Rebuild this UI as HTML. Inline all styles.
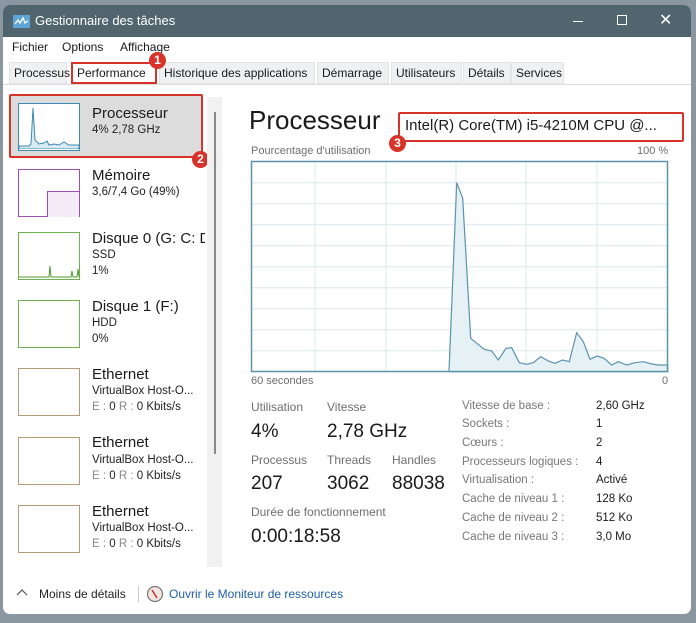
<!DOCTYPE html>
<html><head><meta charset="utf-8"><style>
*{margin:0;padding:0;box-sizing:border-box}
body{width:696px;height:623px;background:#8a96a0;font-family:"Liberation Sans",sans-serif;position:relative;overflow:hidden;color:#1a1a1a}
.a{position:absolute;white-space:nowrap}
#win{position:absolute;left:3px;top:5px;width:688px;height:609px;background:#fff;border-radius:7px;overflow:hidden}
.tb{position:absolute;left:0;top:0;width:100%;height:32px;background:#51656f}
.tab{position:absolute;top:62px;height:22px;background:#eef0f2;border:1px solid #e2e4e6;font-size:12px;line-height:20px;padding:0 4px}
.lbl{font-size:12px;color:#6e6e6e}
.val{font-size:19px;color:#1a1a1a}
.rl{font-size:11.5px;color:#777}
.rv{font-size:11.5px;color:#1a1a1a}
.th{position:absolute;left:18px;width:62px;height:48px;border:1.5px solid}
.nm{font-size:15px;color:#1a1a1a;width:113px;overflow:hidden}
.sb{font-size:11.5px;color:#222;width:113px;overflow:hidden}
.badge{position:absolute;width:17px;height:17px;border-radius:50%;background:#d8332a;color:#fff;font-size:12px;font-weight:bold;text-align:center;line-height:17px}
.red{position:absolute;border:2px solid #d8332a;border-radius:2px}
</style></head><body>
<div id="win">
<div class="tb"></div>
<svg class="a" style="left:10px;top:10px" width="17" height="13"><rect width="17" height="13" fill="#5fa4d6"/><path d="M2 9 L5 5 L7 8 L10 3 L12 8 L15 6" stroke="#fff" stroke-width="1.3" fill="none"/></svg>
<div class="a" style="left:32px;top:8px;font-size:13px;color:#fff">Gestionnaire des tâches</div>
<div class="a" style="left:570px;top:16px;width:10px;height:1px;background:#fff"></div>
<div class="a" style="left:614px;top:10px;width:10px;height:10px;border:1px solid #fff"></div>
<div class="a" style="left:656px;top:5px;font-size:16px;color:#fff">✕</div>
<div class="a" style="left:9px;top:35px;font-size:12px">Fichier</div>
<div class="a" style="left:59px;top:35px;font-size:12px">Options</div>
<div class="a" style="left:117px;top:35px;font-size:12px">Affichage</div>
</div>
<div class="a" style="left:3px;top:84px;width:688px;height:1px;background:#dcdcdc"></div>
<div class="tab" style="left:9px;width:58px">Processus</div>
<div class="tab" style="left:71px;width:86px;background:#fff;border:2px solid #d8332a;line-height:18px">Performance</div>
<div class="tab" style="left:159px;width:156px">Historique des applications</div>
<div class="tab" style="left:317px;width:72px">Démarrage</div>
<div class="tab" style="left:391px;width:71px">Utilisateurs</div>
<div class="tab" style="left:463px;width:48px">Détails</div>
<div class="tab" style="left:511px;width:53px">Services</div>
<div class="badge" style="left:149px;top:52px">1</div>

<div class="a" style="left:10px;top:95px;width:192px;height:62px;background:#dcdcdc"></div>
<div class="red" style="left:9px;top:94px;width:194px;height:64px"></div>
<div class="badge" style="left:192px;top:151px">2</div>
<div class="a" style="left:207px;top:97px;width:15px;height:470px;background:#f1f1f1"></div>
<div class="a" style="left:214px;top:112px;width:2px;height:342px;background:#888"></div>

<div class="th" style="top:103px;border-color:#3d8ab3;background:#fff"><svg width="60" height="45"><path d="M0 42 L10 42 L12 40 L14 4 L16 36 L20 40 L25 39 L28 37 L30 41 L35 40 L40 41 L45 38 L50 41 L60 41 L60 45 L0 45Z" fill="#d9ebf5" stroke="#3d8ab3" stroke-width="1"/></svg></div>
<div class="a nm" style="left:92px;top:105px">Processeur</div>
<div class="a sb" style="left:92px;top:124px">4% 2,78 GHz</div>

<div class="th" style="top:169px;border-color:#9c4fb0"><div style="position:absolute;left:28px;top:21px;width:32px;height:26px;border-left:1.5px solid #9c4fb0;border-top:1.5px solid #9c4fb0;background:#f3ebf6"></div></div>
<div class="a nm" style="left:92px;top:167px">Mémoire</div>
<div class="a sb" style="left:92px;top:186px">3,6/7,4 Go (49%)</div>

<div class="th" style="top:232px;border-color:#6fb04f"><svg width="60" height="45"><path d="M0 44 L30 44 L31 33 L32 44 L52 44 L53 38 L54 44 L58 44 L59 36 L60 44" stroke="#4f9a30" fill="none"/></svg></div>
<div class="a nm" style="left:92px;top:230px">Disque 0 (G: C: D</div>
<div class="a sb" style="left:92px;top:249px">SSD</div>
<div class="a sb" style="left:92px;top:265px">1%</div>

<div class="th" style="top:300px;border-color:#6fb04f"></div>
<div class="a nm" style="left:92px;top:298px">Disque 1 (F:)</div>
<div class="a sb" style="left:92px;top:317px">HDD</div>
<div class="a sb" style="left:92px;top:333px">0%</div>

<div class="th" style="top:368px;border-color:#b39b75"></div>
<div class="a nm" style="left:92px;top:366px">Ethernet</div>
<div class="a sb" style="left:92px;top:385px">VirtualBox Host-O...</div>
<div class="a sb" style="left:92px;top:401px"><span style="color:#888">E :</span> 0 <span style="color:#888">R :</span> 0 Kbits/s</div>
<div class="th" style="top:437px;border-color:#b39b75"></div>
<div class="a nm" style="left:92px;top:434px">Ethernet</div>
<div class="a sb" style="left:92px;top:454px">VirtualBox Host-O...</div>
<div class="a sb" style="left:92px;top:470px"><span style="color:#888">E :</span> 0 <span style="color:#888">R :</span> 0 Kbits/s</div>
<div class="th" style="top:505px;border-color:#b39b75"></div>
<div class="a nm" style="left:92px;top:503px">Ethernet</div>
<div class="a sb" style="left:92px;top:522px">VirtualBox Host-O...</div>
<div class="a sb" style="left:92px;top:538px"><span style="color:#888">E :</span> 0 <span style="color:#888">R :</span> 0 Kbits/s</div>

<div class="a" style="left:249px;top:105px;font-size:26px">Processeur</div>
<div class="red" style="left:398px;top:112px;width:286px;height:30px"></div>
<div class="a" style="left:405px;top:117px;font-size:15px">Intel(R) Core(TM) i5-4210M CPU @...</div>
<div class="badge" style="left:389px;top:135px">3</div>
<div class="a lbl" style="left:251px;top:145px;font-size:11px">Pourcentage d'utilisation</div>
<div class="a lbl" style="left:637px;top:145px;font-size:11px">100 %</div>
<svg class="a" style="left:0;top:0" width="696" height="623">
<g stroke="#d8e8ee" stroke-width="1">
<path d="M251 182.7H668M251 203.7H668M251 224.7H668M251 245.7H668M251 266.7H668M251 287.7H668M251 308.7H668M251 329.7H668M251 350.7H668"/>
<path d="M315 161V372M386 161V372M456 161V372M526 161V372M597 161V372"/>
</g>
<path d="M449 371.7 L456.7 182.7 L462.7 198.3 L470.7 338.3 L484.3 349.3 L491.7 351 L498.3 360 L506 348.3 L511.7 347.7 L519.3 362.7 L526.7 364.3 L533.3 362.7 L540.7 356.7 L548.3 361 L555 363.3 L562.7 360 L569.3 361.7 L576.7 332.7 L583.3 341.7 L590 359.3 L597.3 356 L604 358.3 L611.7 365 L618.3 361.7 L626.7 365 L635 362.7 L643.3 361.7 L651.7 364 L658.3 365 L667.7 365 L667.7 371.7Z" fill="#e6f1f6" stroke="#5b93ad" stroke-width="1.2"/>
<rect x="251.5" y="161.5" width="416" height="210" fill="none" stroke="#5b93ad" stroke-width="1.5"/>
</svg>
<div class="a lbl" style="left:251px;top:375px;font-size:11px">60 secondes</div>
<div class="a lbl" style="left:662px;top:375px;font-size:11px">0</div>

<div class="a lbl" style="left:251px;top:400px">Utilisation</div>
<div class="a lbl" style="left:327px;top:400px">Vitesse</div>
<div class="a val" style="left:251px;top:421px">4%</div>
<div class="a val" style="left:327px;top:421px">2,78 GHz</div>
<div class="a lbl" style="left:251px;top:453px">Processus</div>
<div class="a lbl" style="left:327px;top:453px">Threads</div>
<div class="a lbl" style="left:392px;top:453px">Handles</div>
<div class="a val" style="left:251px;top:473px">207</div>
<div class="a val" style="left:327px;top:473px">3062</div>
<div class="a val" style="left:392px;top:473px">88038</div>
<div class="a lbl" style="left:251px;top:505px">Durée de fonctionnement</div>
<div class="a val" style="left:251px;top:526px">0:00:18:58</div>

<div class="a rl" style="left:462px;top:400px">Vitesse de base :</div><div class="a rv" style="left:596px;top:400px">2,60 GHz</div>
<div class="a rl" style="left:462px;top:418px">Sockets :</div><div class="a rv" style="left:596px;top:418px">1</div>
<div class="a rl" style="left:462px;top:437px">Cœurs :</div><div class="a rv" style="left:596px;top:437px">2</div>
<div class="a rl" style="left:462px;top:456px">Processeurs logiques :</div><div class="a rv" style="left:596px;top:456px">4</div>
<div class="a rl" style="left:462px;top:474px">Virtualisation :</div><div class="a rv" style="left:596px;top:474px">Activé</div>
<div class="a rl" style="left:462px;top:493px">Cache de niveau 1 :</div><div class="a rv" style="left:596px;top:493px">128 Ko</div>
<div class="a rl" style="left:462px;top:512px">Cache de niveau 2 :</div><div class="a rv" style="left:596px;top:512px">512 Ko</div>
<div class="a rl" style="left:462px;top:531px">Cache de niveau 3 :</div><div class="a rv" style="left:596px;top:531px">3,0 Mo</div>

<svg class="a" style="left:16px;top:588px" width="12" height="8"><path d="M1 7 L6 2 L11 7" stroke="#555" fill="none" stroke-width="1.2"/></svg>
<div class="a" style="left:39px;top:587px;font-size:12px;color:#222">Moins de détails</div>
<div class="a" style="left:138px;top:586px;width:1px;height:16px;background:#ccc"></div>
<svg class="a" style="left:146px;top:585px" width="18" height="18"><circle cx="9" cy="9" r="7.5" fill="#f3e6e2" stroke="#777" stroke-width="1.2"/><path d="M6 5 L11 13" stroke="#c0392b" stroke-width="1.6"/></svg>
<div class="a" style="left:169px;top:587px;font-size:12px;color:#1f5fa6">Ouvrir le Moniteur de ressources</div>
</body></html>
